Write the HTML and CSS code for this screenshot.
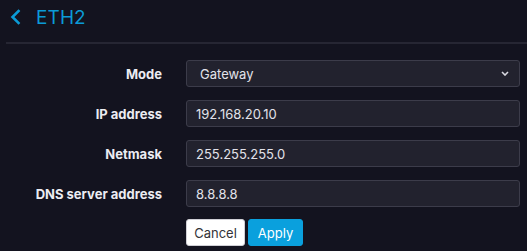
FILE: index.html
```html
<!DOCTYPE html>
<html>
<head>
<meta charset="utf-8">
<link rel="stylesheet" href="styles.css">
</head>
<body>
<div class="page">
  <header class="header">
    <svg class="back" width="12" height="16" viewBox="0 0 12 16"><path d="M9.5 2 L3.5 8 L9.5 14" fill="none" stroke="#0b9bd6" stroke-width="2.6" stroke-linecap="square"/></svg>
    <h1 class="title">ETH2</h1>
  </header>
  <form class="form">
    <div class="row">
      <label class="label">Mode</label>
      <div class="field select">
        <span class="value sel">Gateway</span>
        <svg class="caret" width="8" height="5" viewBox="0 0 8 5"><path d="M1 1 L4 4 L7 1" fill="none" stroke="#d8d8e0" stroke-width="1.6"/></svg>
      </div>
    </div>
    <div class="row">
      <label class="label">IP address</label>
      <div class="field"><span class="value">192.168.20.10</span></div>
    </div>
    <div class="row">
      <label class="label">Netmask</label>
      <div class="field"><span class="value">255.255.255.0</span></div>
    </div>
    <div class="row">
      <label class="label">DNS server address</label>
      <div class="field"><span class="value">8.8.8.8</span></div>
    </div>
    <div class="row buttons">
      <span class="label"></span>
      <div class="actions">
        <button type="button" class="btn cancel">Cancel</button>
        <button type="button" class="btn apply">Apply</button>
      </div>
    </div>
  </form>
</div>
</body>
</html>
```
FILE: styles.css
```css
html, body {
  margin: 0;
  padding: 0;
  background: #13131f;
}
body {
  font-family: Inter, "Noto Sans", "Liberation Sans", sans-serif;
  color: #e6e6ec;
  width: 527px;
  height: 251px;
  overflow: hidden;
}
.page {
  padding: 0 0 0 6px;
}
.header {
  display: flex;
  align-items: center;
  height: 34px;
  padding-left: 3px;
  border-bottom: 2px solid #262633;
  margin-bottom: 16px;
  padding-top: 0;
  box-sizing: content-box;
  padding-bottom: 8px;
}
.back {
  display: block;
  margin-top: 0;
}
.title {
  margin: 0 0 0 15px;
  font-size: 19px;
  font-weight: 400;
  color: #0b9bd6;
  letter-spacing: 0.1px;
}
.form {
  display: flex;
  flex-direction: column;
  gap: 13px;
}
.row {
  display: flex;
  align-items: center;
}
.label {
  width: 156px;
  text-align: right;
  font-size: 13px;
  font-weight: 700;
  color: #ececf2;
  margin-right: 24px;
  flex: none;
}
.field {
  width: 334px;
  height: 27px;
  box-sizing: border-box;
  background: #22222e;
  border: 1px solid #3c3c4a;
  border-radius: 3px;
  display: flex;
  align-items: center;
  padding: 0 9px;
}
.value {
  font-size: 13px;
  color: #e2e2ea;
}
.value.sel {
  padding-left: 4px;
  flex: 1;
}
.caret {
  display: block;
  margin-right: 1px;
}
.buttons {
  margin-top: -1px;
}
.actions {
  display: flex;
  gap: 3px;
}
.btn {
  height: 27px;
  font-family: Inter, "Noto Sans", "Liberation Sans", sans-serif;
  font-size: 13px;
  border-radius: 3px;
  padding: 0;
  cursor: pointer;
}
.cancel {
  width: 59px;
  background: #ffffff;
  color: #333338;
  border: 1px solid #d0d0d6;
}
.apply {
  width: 55px;
  background: #0aa0dd;
  color: #ffffff;
  border: 1px solid #0aa0dd;
}
```
